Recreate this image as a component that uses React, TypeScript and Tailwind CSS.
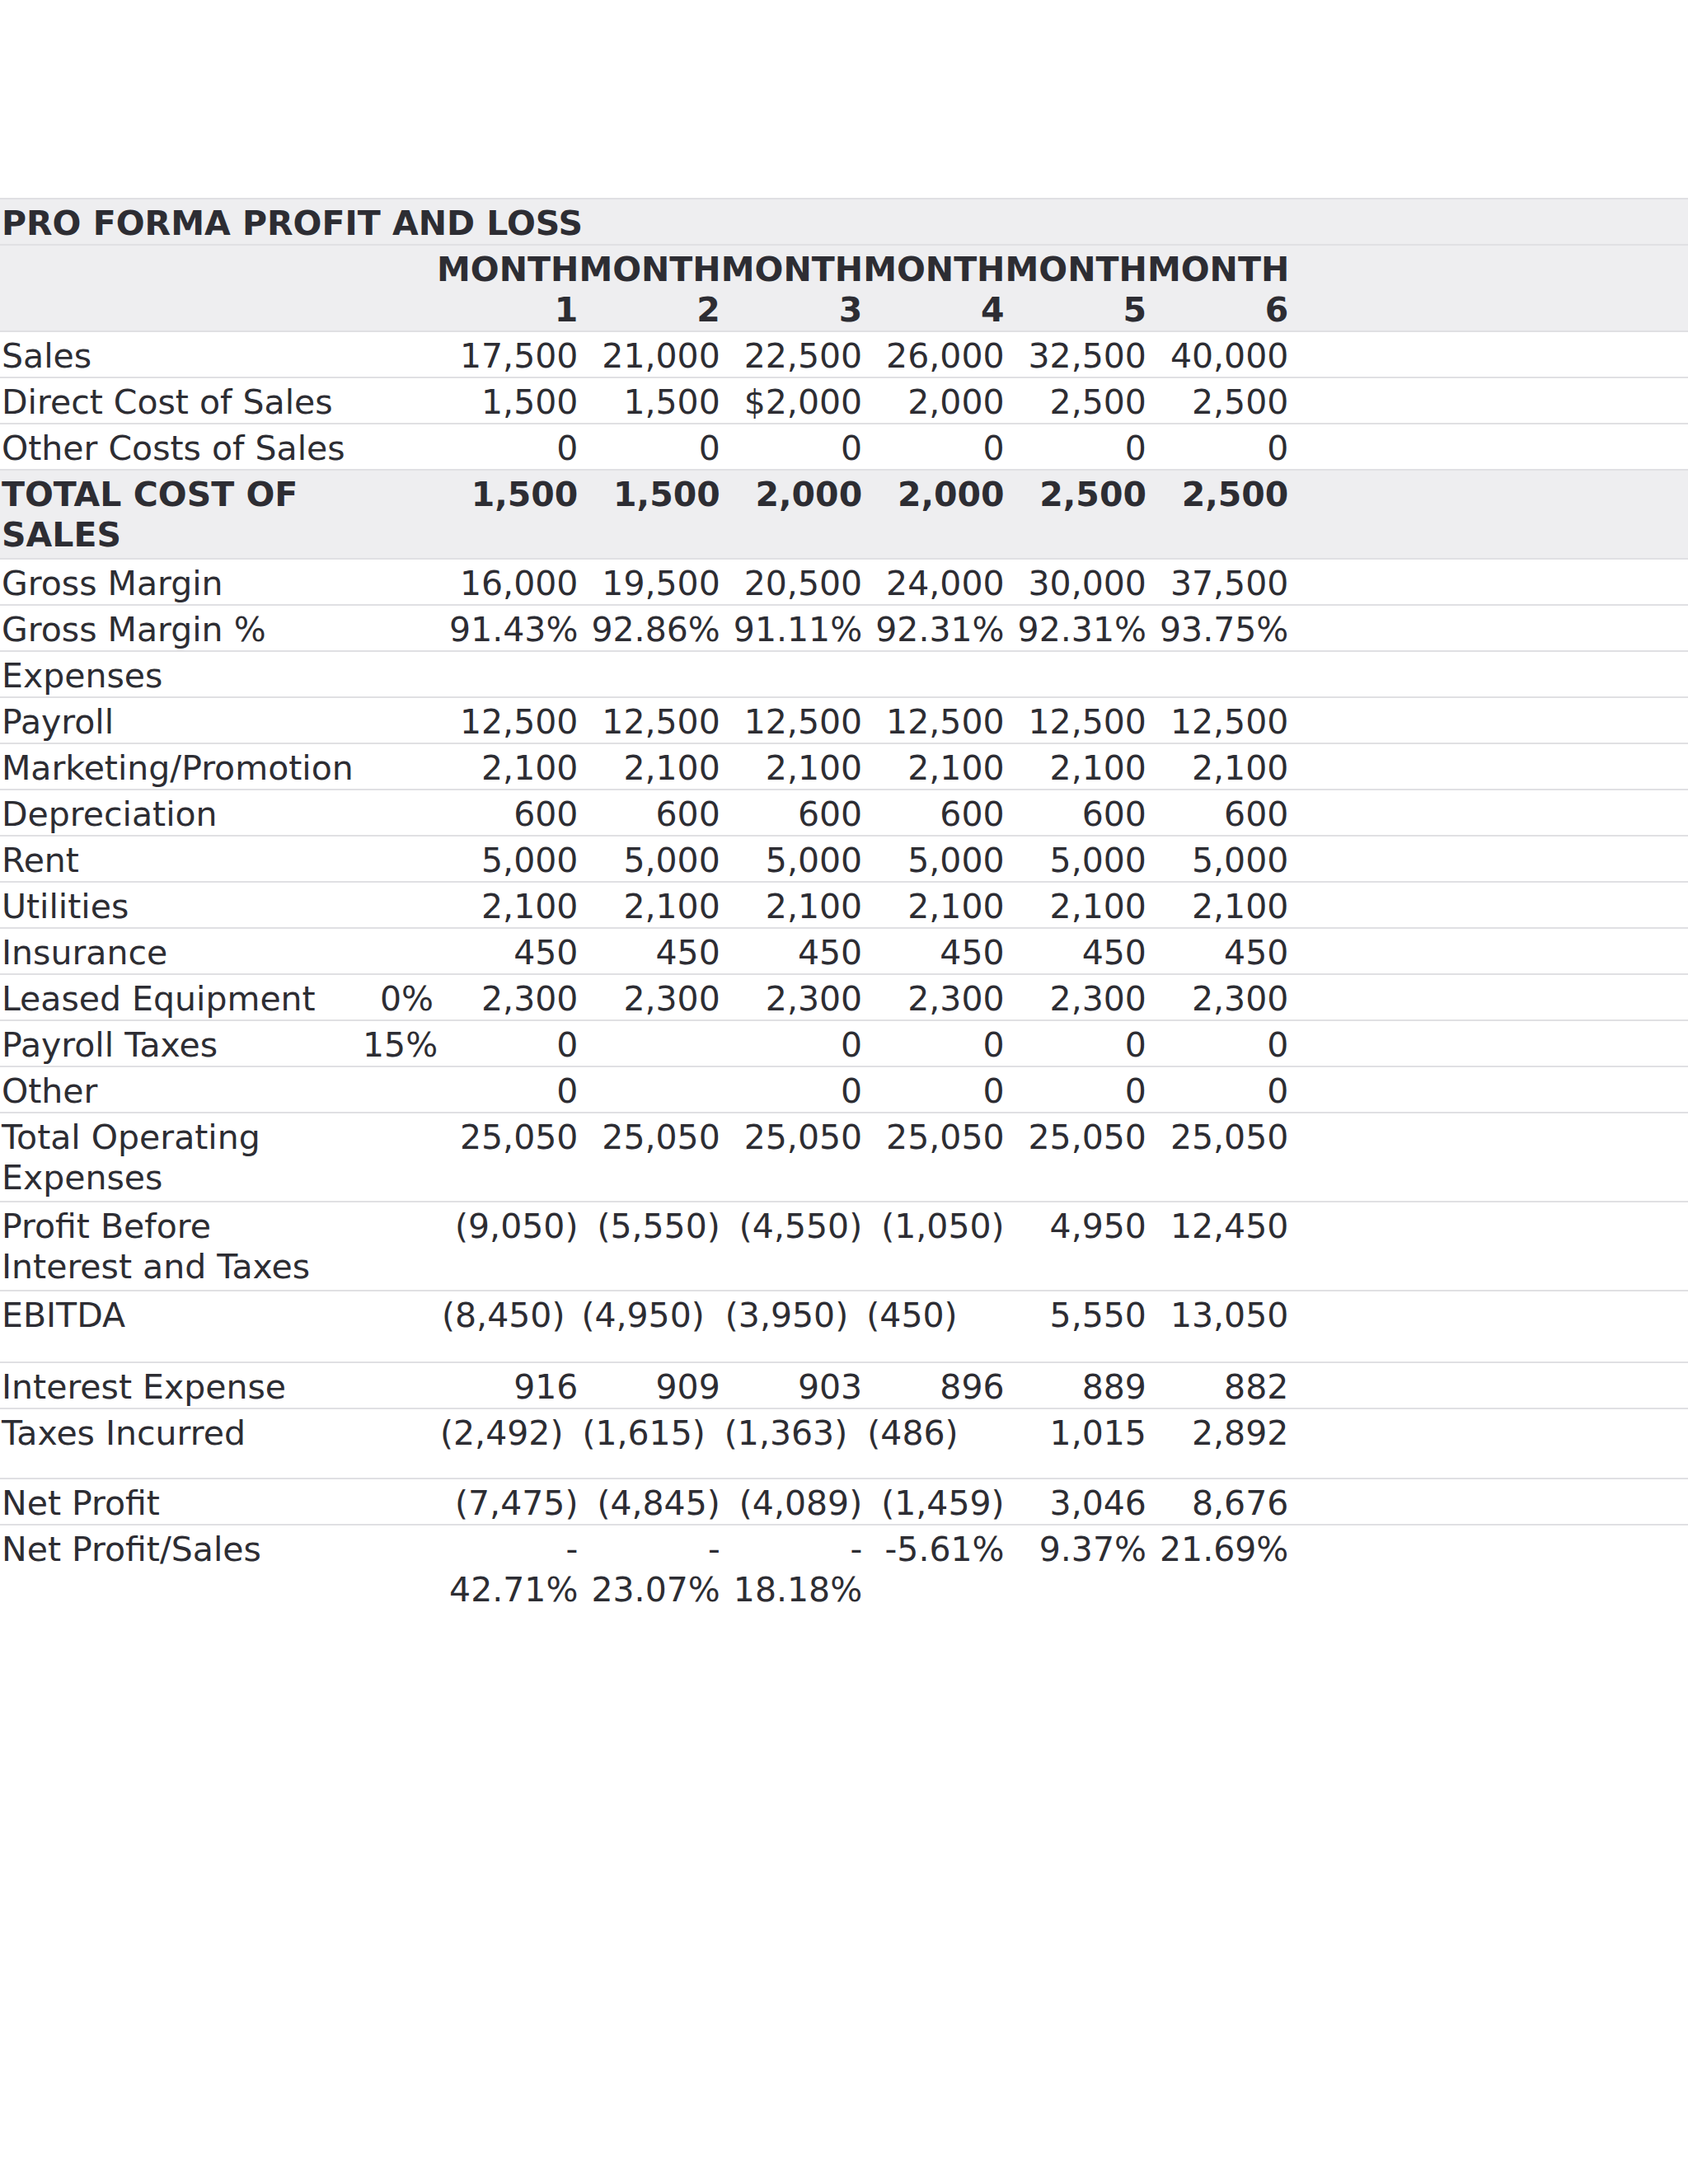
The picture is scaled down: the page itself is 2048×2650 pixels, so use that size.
import React from "react";

type Row = {
  label: React.ReactNode;
  pct?: string;
  values: React.ReactNode[];
  bold?: boolean;
  shaded?: boolean;
  double?: boolean;
  extra?: string;
  last?: boolean;
};

const rows: Row[] = [
  { label: "Sales", values: ["17,500", "21,000", "22,500", "26,000", "32,500", "40,000"] },
  { label: "Direct Cost of Sales", values: ["1,500", "1,500", "$2,000", "2,000", "2,500", "2,500"] },
  { label: "Other Costs of Sales", values: ["0", "0", "0", "0", "0", "0"] },
  {
    label: (
      <>
        TOTAL COST OF
        <br />
        SALES
      </>
    ),
    values: ["1,500", "1,500", "2,000", "2,000", "2,500", "2,500"],
    bold: true,
    shaded: true,
    double: true,
  },
  { label: "Gross Margin", values: ["16,000", "19,500", "20,500", "24,000", "30,000", "37,500"] },
  { label: "Gross Margin %", values: ["91.43%", "92.86%", "91.11%", "92.31%", "92.31%", "93.75%"] },
  { label: "Expenses", values: ["", "", "", "", "", ""] },
  { label: "Payroll", values: ["12,500", "12,500", "12,500", "12,500", "12,500", "12,500"] },
  { label: "Marketing/Promotion", values: ["2,100", "2,100", "2,100", "2,100", "2,100", "2,100"] },
  { label: "Depreciation", values: ["600", "600", "600", "600", "600", "600"] },
  { label: "Rent", values: ["5,000", "5,000", "5,000", "5,000", "5,000", "5,000"] },
  { label: "Utilities", values: ["2,100", "2,100", "2,100", "2,100", "2,100", "2,100"] },
  { label: "Insurance", values: ["450", "450", "450", "450", "450", "450"] },
  { label: "Leased Equipment", pct: "0%", values: ["2,300", "2,300", "2,300", "2,300", "2,300", "2,300"] },
  { label: "Payroll Taxes", pct: "15%", values: ["0", "", "0", "0", "0", "0"] },
  { label: "Other", values: ["0", "", "0", "0", "0", "0"] },
  {
    label: (
      <>
        Total Operating
        <br />
        Expenses
      </>
    ),
    values: ["25,050", "25,050", "25,050", "25,050", "25,050", "25,050"],
    double: true,
  },
  {
    label: (
      <>
        Profit Before
        <br />
        Interest and Taxes
      </>
    ),
    values: ["(9,050)", "(5,550)", "(4,550)", "(1,050)", "4,950", "12,450"],
    double: true,
  },
  {
    label: "EBITDA",
    values: [
      <span className="pr-[16px]">(8,450)</span>,
      <span className="pr-[19px]">(4,950)</span>,
      <span className="pr-[17px]">(3,950)</span>,
      <span className="pr-[57px]">(450)</span>,
      "5,550",
      "13,050",
    ],
    extra: "pb-[31px]",
  },
  { label: "Interest Expense", values: ["916", "909", "903", "896", "889", "882"] },
  {
    label: "Taxes Incurred",
    values: [
      <span className="pr-[18px]">(2,492)</span>,
      <span className="pr-[18px]">(1,615)</span>,
      <span className="pr-[18px]">(1,363)</span>,
      <span className="pr-[56px]">(486)</span>,
      "1,015",
      "2,892",
    ],
    extra: "pb-[29px]",
  },
  { label: "Net Profit", values: ["(7,475)", "(4,845)", "(4,089)", "(1,459)", "3,046", "8,676"] },
  {
    label: "Net Profit/Sales",
    values: [
      <>
        -<br />
        42.71%
      </>,
      <>
        -<br />
        23.07%
      </>,
      <>
        -<br />
        18.18%
      </>,
      "-5.61%",
      "9.37%",
      "21.69%",
    ],
    last: true,
  },
];

function TableRow({ row }: { row: Row }) {
  const pad = row.extra ?? (row.double ? "pb-[3px]" : "pb-0");
  return (
    <div
      className={`flex w-full ${row.shaded ? "bg-[#eeeef0]" : "bg-white"} ${
        row.last ? "" : "border-b-2 border-[#e0e0e3]"
      } ${row.bold ? "font-bold" : ""}`}
    >
      <div className={`w-[440px] shrink-0 pl-[2px] pt-[5px] whitespace-nowrap ${pad}`}>{row.label}</div>
      <div className="w-[90px] shrink-0 pr-[4px] pt-[5px] text-right">{row.pct}</div>
      {row.values.map((v, i) => (
        <div key={i} className="w-[172.4px] shrink-0 pr-[1px] pt-[5px] text-right whitespace-nowrap">
          {v}
        </div>
      ))}
      <div className="flex-1" />
    </div>
  );
}

export default function App() {
  return (
    <div
      className="min-h-[2650px] w-full bg-white pt-[240px] text-[41px] leading-[49px] text-[#2d2d33]"
      style={{ fontFamily: '"DejaVu Sans", Verdana, sans-serif' }}
    >
      <div className="w-full border-t-2 border-[#e0e0e3]">
        <div className="w-full border-b-2 border-[#e0e0e3] bg-[#eeeef0] pl-[2px] pt-[5px] pb-0 font-bold whitespace-nowrap">
          PRO FORMA PROFIT AND LOSS
        </div>
        <div className="flex w-full border-b-2 border-[#e0e0e3] bg-[#eeeef0] font-bold">
          <div className="w-[440px] shrink-0 pt-[5px] pb-[3px]" />
          <div className="w-[90px] shrink-0" />
          {[1, 2, 3, 4, 5, 6].map((n) => (
            <div key={n} className="w-[172.4px] shrink-0 pr-[1px] pt-[5px] text-right whitespace-nowrap">
              MONTH
              <br />
              {n}
            </div>
          ))}
          <div className="flex-1" />
        </div>
        {rows.map((r, i) => (
          <TableRow key={i} row={r} />
        ))}
      </div>
    </div>
  );
}
